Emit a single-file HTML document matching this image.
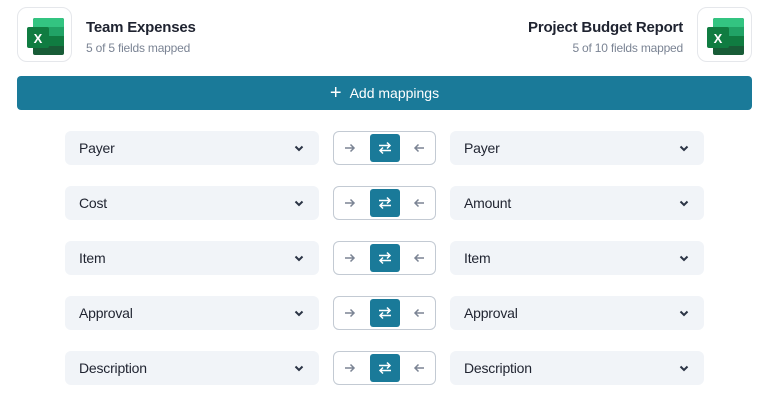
<!DOCTYPE html>
<html><head><style>
*{margin:0;padding:0;box-sizing:border-box}
body{width:768px;height:400px;background:#fff;font-family:"Liberation Sans",sans-serif;position:relative;overflow:hidden;color:#1f2937}
.ib{position:absolute;top:7px;width:55px;height:55px;border:1px solid #e5e7eb;border-radius:10px;background:#fff}
.ib svg{position:absolute;left:0;top:0}
.t{position:absolute;font-size:15px;font-weight:bold;color:#1f2330;letter-spacing:-0.2px}
.s{position:absolute;font-size:12px;color:#7b8494;letter-spacing:-0.2px}
.btn{position:absolute;left:17px;top:76px;width:735px;height:34px;background:#1a7a99;border-radius:4px;color:#fff;font-size:14px;display:flex;align-items:center;justify-content:center}
.dd{position:absolute;width:254px;height:34px;background:#f1f4f8;border-radius:6px;font-size:14px;color:#1f2330;padding-left:14px;line-height:34px;letter-spacing:-0.2px}
.dd svg{position:absolute;right:15px;top:14px}
.tg{position:absolute;left:333px;width:103px;height:34px;border:1px solid #c3cad3;border-radius:6px;background:#fff}
.tg .a{position:absolute;left:36px;top:2px;width:30px;height:28px;background:#1a7a99;border-radius:3px}
.tg svg{position:absolute}
</style></head><body>
<div class="ib" style="left:17px"><svg width="55" height="55" viewBox="0 0 55 55"><rect x="15" y="10" width="31" height="37" rx="2" fill="#185c37"/><rect x="15" y="10" width="31" height="10" rx="2" fill="#33c481"/><rect x="15" y="19" width="31" height="10" fill="#21a366"/><rect x="31" y="28" width="15" height="10" fill="#107c41"/><rect x="9" y="19" width="22" height="21" rx="2" fill="#107c41"/><text x="20" y="35" font-size="13" font-weight="bold" fill="#fff" text-anchor="middle" font-family="Liberation Sans">X</text></svg></div>
<div class="t" style="left:86px;top:19px">Team Expenses</div>
<div class="s" style="left:86px;top:41px">5 of 5 fields mapped</div>
<div class="ib" style="left:697px"><svg width="55" height="55" viewBox="0 0 55 55"><rect x="15" y="10" width="31" height="37" rx="2" fill="#185c37"/><rect x="15" y="10" width="31" height="10" rx="2" fill="#33c481"/><rect x="15" y="19" width="31" height="10" fill="#21a366"/><rect x="31" y="28" width="15" height="10" fill="#107c41"/><rect x="9" y="19" width="22" height="21" rx="2" fill="#107c41"/><text x="20" y="35" font-size="13" font-weight="bold" fill="#fff" text-anchor="middle" font-family="Liberation Sans">X</text></svg></div>
<div class="t" style="right:85px;top:19px">Project Budget Report</div>
<div class="s" style="right:85px;top:41px">5 of 10 fields mapped</div>
<div class="btn"><span style="font-size:20px;margin-right:8px;line-height:1;font-weight:300">+</span>Add mappings</div>
<div id="rows"></div>
<script>
var L=["Payer","Cost","Item","Approval","Description"],R=["Payer","Amount","Item","Approval","Description"],h="";
var ch='<svg width="10" height="7" viewBox="0 0 10 7"><path d="M1.5 1.5l3.5 3.5 3.5-3.5" stroke="#2b3445" stroke-width="2" fill="none"/></svg>';
var ra='<svg style="left:10px;top:11px" width="12" height="10" viewBox="0 0 12 10"><path d="M1 5h9M6.5 1.5L10 5 6.5 8.5" stroke="#7b8494" stroke-width="1.5" fill="none"/></svg>';
var la='<svg style="left:79px;top:11px" width="12" height="10" viewBox="0 0 12 10"><path d="M11 5H2M5.5 1.5L2 5l3.5 3.5" stroke="#7b8494" stroke-width="1.5" fill="none"/></svg>';
var sw='<svg style="left:44px;top:9px" width="14" height="14" viewBox="0 0 14 14"><path d="M1 4.5h11M9 1.5l3 3-3 3M13 9.5H2M5 6.5l-3 3 3 3" stroke="#fff" stroke-width="1.5" fill="none"/></svg>';
for(var i=0;i<5;i++){var y=131+55*i;
h+='<div class="dd" style="left:65px;top:'+y+'px">'+L[i]+ch+'</div>';
h+='<div class="tg" style="top:'+y+'px">'+ra+'<span class="a"></span>'+sw+la+'</div>';
h+='<div class="dd" style="left:450px;top:'+y+'px">'+R[i]+ch+'</div>';}
document.getElementById("rows").innerHTML=h;
</script>
</body></html>
